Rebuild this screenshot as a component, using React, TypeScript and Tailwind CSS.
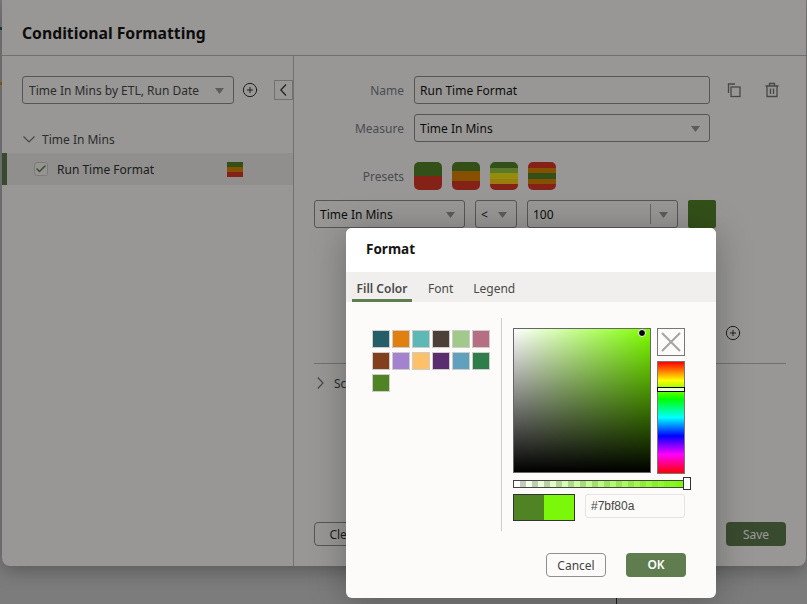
import { Check, CirclePlus } from "lucide-react";

const palette = [
  "#235e69", "#e2800f", "#5eb8b6", "#4d4038", "#a0c98a", "#b56e82",
  "#823f1c", "#a383cf", "#fdc16a", "#5a2e6e", "#60a1bd", "#2f7d4b",
  "#4f8324",
];

const presets = [
  ["#55852b", "#de3a28"],
  ["#55852b", "#de8500", "#de3a28"],
  ["#55852b", "#96cc43", "#f8e814", "#ffd21a", "#de3a28"],
  ["#de3a28", "#de8500", "#55852b", "#de8500", "#de3a28"],
];

function Caret() {
  return (
    <svg width="9" height="6" viewBox="0 0 9 6" className="mt-[2px] shrink-0">
      <path d="M0 0h9L4.5 6z" fill="#9a9a9a" />
    </svg>
  );
}

function Field({ text, width, caret = true }: { text: string; width: string; caret?: boolean }) {
  return (
    <div className={`flex h-[28px] items-center justify-between rounded-[3px] border border-[#8f8f8f] pl-[5px] pr-[9px] text-[#161513] ${width}`}>
      <span className="whitespace-nowrap pt-[2px]">{text}</span>
      {caret && <Caret />}
    </div>
  );
}

function LabelRow({ label, children }: { label: string; children: React.ReactNode }) {
  return (
    <div className="flex items-center gap-[10px]">
      <span className="w-[90px] pt-[2px] text-right text-[#7a7f85]">{label}</span>
      {children}
    </div>
  );
}

function FormatDialog() {
  return (
    <div className="absolute left-[346px] top-[228px] flex h-[370px] w-[370px] flex-col overflow-hidden rounded-[6px] bg-[#fcfbfa] shadow-[0_4px_36px_rgba(0,0,0,0.28)]">
      <div className="flex h-[44px] items-center bg-white pb-[2px] pl-[20px] text-[13.5px] font-bold text-[#161513]">Format</div>
      <div className="flex h-[30px] bg-[#f1efed] pl-[6px] text-[#4a4a48]">
        <div className="flex w-[60px] items-center justify-center border-b-[3px] border-[#5f7d4f] pt-[6px] font-semibold">Fill Color</div>
        <div className="ml-[16px] flex items-center pt-[4px]">Font</div>
        <div className="ml-[20px] flex items-center pt-[4px]">Legend</div>
      </div>
      <div className="flex">
        <div className="ml-[26px] mt-[28px] grid h-fit w-[118px] grid-cols-6 gap-x-[2px] gap-y-[4px]">
          {palette.map((c) => (
            <div key={c} className="h-[18px] w-[18px] border border-[#cfcdcb]" style={{ backgroundColor: c }} />
          ))}
        </div>
        <div className="ml-[11px] mt-[16px] h-[213px] w-px bg-[#cfcdcb]" />
        <div className="ml-[11px] mt-[26px] w-[172px]">
          <div className="flex gap-[6px]">
            <div className="relative h-[145px] w-[138px] border border-[#666] bg-[linear-gradient(to_top,#000,transparent),linear-gradient(to_right,#fff,#7fff00)]">
              <div className="absolute right-[4px] top-[0px] h-[8px] w-[8px] rounded-full border border-white bg-black" />
            </div>
            <div className="flex flex-col gap-[5px]">
              <div className="h-[28px] w-[28px] border border-[#777]">
                <svg width="26" height="26" viewBox="0 0 26 26">
                  <path d="M4 4l18 18M22 4L4 22" stroke="#a3a3a3" strokeWidth="2" fill="none" />
                </svg>
              </div>
              <div className="relative h-[113px] w-[28px] border border-[#777] bg-[linear-gradient(to_bottom,#f00,#ff0,#0f0,#0ff,#00f,#f0f,#f00)]">
                <div className="absolute inset-x-[-1px] top-[25px] h-[5px] border border-black bg-[#eaffd8]" />
              </div>
            </div>
          </div>
          <div className="relative mt-[6px] h-[8px] w-[173px] border border-[#444] bg-[linear-gradient(to_right,rgba(123,248,10,0),#7bf80a),repeating-linear-gradient(to_right,#fff_0_6px,#c8c8c8_6px_12px)]">
            <div className="absolute right-[-6px] top-[-4px] h-[13px] w-[8px] border border-[#333] bg-white" />
          </div>
          <div className="mt-[6px] flex gap-[10px]">
            <div className="flex h-[27px] w-[62px] border border-[#333]">
              <div className="w-[30px] bg-[#4f8324]" />
              <div className="flex-1 bg-[#7bf80a]" />
            </div>
            <div className="flex h-[24px] w-[100px] items-center rounded-[3px] border border-[#e6e4e2] pl-[5px] font-['Liberation_Sans',sans-serif] text-[#444]">#7bf80a</div>
          </div>
        </div>
      </div>
      <div className="mt-[22px] flex justify-end gap-[20px] pr-[30px]">
        <div className="flex h-[24px] w-[60px] items-center justify-center rounded-[4px] border border-[#8f8f8f] pt-[2px] text-[12px] text-[#444]">Cancel</div>
        <div className="flex h-[24px] w-[60px] items-center justify-center rounded-[4px] bg-[#5f7d4f] font-semibold text-white">OK</div>
      </div>
    </div>
  );
}

export default function App() {
  return (
    <div className="relative h-[604px] w-[807px] overflow-hidden bg-[#cfcfcf] font-['Noto_Sans',sans-serif] text-[12px]">
      <div className="absolute left-0 top-[27px] h-[3px] w-[2px] bg-[#235e69]" />
      <div className="absolute left-0 top-[82px] h-[3px] w-[2px] bg-[#e2800f]" />
      <div className="ml-[2px] flex h-[566px] w-[804px] flex-col rounded-b-[8px] bg-[#fdfcfb] shadow-[0_4px_20px_rgba(0,0,0,0.3)]">
        <div className="flex h-[56px] shrink-0 items-center border-b border-[#bdbdbd] pl-[20px] pt-[13px] text-[15.75px] font-bold text-[#161513]">
          Conditional Formatting
        </div>
        <div className="flex flex-1">
          <div className="w-[292px] shrink-0 border-r border-[#bdbdbd]">
            <div className="mt-[20px] flex items-center pl-[20px]">
              <div className="flex h-[28px] w-[212px] items-center justify-between rounded-[3px] border border-[#8f8f8f] pl-[6px] pr-[9px] text-[#4a4a48]">
                <span className="pt-[2px]">Time In Mins by ETL, Run Date</span>
                <Caret />
              </div>
              <CirclePlus className="ml-[8px] h-[16px] w-[16px] text-[#333]" strokeWidth={1.5} />
              <div className="ml-[16px] flex h-[20px] w-[19px] items-center justify-center border border-[#bdbdbd]">
                <svg width="7" height="12" viewBox="0 0 7 12" fill="none" stroke="#333" strokeWidth="1.2">
                  <path d="M6 .5L.8 6 6 11.5" />
                </svg>
              </div>
            </div>
            <div className="mt-[26px] flex h-[18px] items-center pl-[21px] text-[#4a4a48]">
              <svg width="12" height="7" viewBox="0 0 12 7" fill="none" stroke="#777" strokeWidth="1.2">
                <path d="M.5.5L6 6 11.5.5" />
              </svg>
              <span className="ml-[7px] pt-[2px]">Time In Mins</span>
            </div>
            <div className="mt-[5px] flex h-[32px] items-center border-l-[5px] border-[#5f7d4f] bg-[#f0eeec] pl-[27px] text-[#333]">
              <div className="flex h-[14px] w-[14px] items-center justify-center rounded-[3px] border border-[#d0cecc] bg-[#f8f7f6]">
                <Check className="h-[12px] w-[12px] text-[#5f7d4f]" strokeWidth={3} />
              </div>
              <span className="ml-[9px] w-[170px] pt-[2px]">Run Time Format</span>
              <div className="flex h-[15px] w-[16px] flex-col">
                <div className="flex-1 bg-[#55852b]" />
                <div className="flex-1 bg-[#de8500]" />
                <div className="flex-1 bg-[#de3a28]" />
              </div>
            </div>
          </div>
          <div className="flex flex-1 flex-col px-[20px] pb-[20px]">
            <div className="mt-[20px]">
              <LabelRow label="Name">
                <Field text="Run Time Format" width="w-[296px]" caret={false} />
                <svg width="16" height="16" viewBox="0 0 16 16" fill="none" stroke="#777" strokeWidth="1.3" className="ml-[6px]">
                  <path d="M9 2H2.5v9" />
                  <rect x="5" y="5" width="9" height="9.5" />
                </svg>
                <svg width="16" height="16" viewBox="0 0 16 16" fill="none" stroke="#777" strokeWidth="1.3" className="ml-[12px]">
                  <path d="M1.5 4h13M5.5 4V1.5h5V4M3 4v10.5h10V4M6.5 6.5v5.5M9.5 6.5v5.5" />
                </svg>
              </LabelRow>
            </div>
            <div className="mt-[10px]">
              <LabelRow label="Measure">
                <Field text="Time In Mins" width="w-[296px]" />
              </LabelRow>
            </div>
            <div className="mt-[20px]">
              <LabelRow label="Presets">
                <div className="flex gap-[10px]">
                  {presets.map((bands, i) => (
                    <div key={i} className="flex h-[28px] w-[28px] flex-col overflow-hidden rounded-[5px]">
                      {bands.map((c, j) => (
                        <div key={j} className="flex-1" style={{ backgroundColor: c }} />
                      ))}
                    </div>
                  ))}
                </div>
              </LabelRow>
            </div>
            <div className="mt-[10px] flex gap-[10px]">
              <Field text="Time In Mins" width="w-[151px]" />
              <Field text="<" width="w-[42px]" />
              <div className="flex h-[28px] w-[151px] items-center justify-between rounded-[3px] border border-[#8f8f8f] pl-[5px] pr-[9px] text-[#161513]">
                <span className="pt-[2px]">100</span>
                <div className="flex h-[20px] items-center border-l border-[#aaa] pl-[8px]">
                  <Caret />
                </div>
              </div>
              <div className="h-[28px] w-[28px] rounded-[2px] bg-[#55852b]" />
            </div>
            <div className="mt-[97px] flex justify-end pr-[45px]">
              <CirclePlus className="h-[16px] w-[16px] text-[#333]" strokeWidth={1.5} />
            </div>
            <div className="mt-[22px] h-px bg-[#bdbdbd]" />
            <div className="mt-[10px] flex h-[18px] items-center pl-[3px] text-[#4a4a48]">
              <svg width="7" height="12" viewBox="0 0 7 12" fill="none" stroke="#777" strokeWidth="1.2">
                <path d="M.8.5L6 6 .8 11.5" />
              </svg>
              <span className="ml-[10px] pt-[2px]">Scope</span>
            </div>
            <div className="mt-auto flex justify-between">
              <div className="flex h-[24px] w-[60px] items-center justify-center rounded-[4px] border border-[#8f8f8f] pt-[2px] text-[#333]">Clear</div>
              <div className="flex h-[24px] w-[60px] items-center justify-center rounded-[4px] bg-[#5f7d4f] pt-[2px] text-white">Save</div>
            </div>
          </div>
        </div>
      </div>
      <div className="ml-[616px] h-[38px] w-px bg-[#333]" />
      <div className="absolute inset-0 bg-black/40" />
      <FormatDialog />
    </div>
  );
}
